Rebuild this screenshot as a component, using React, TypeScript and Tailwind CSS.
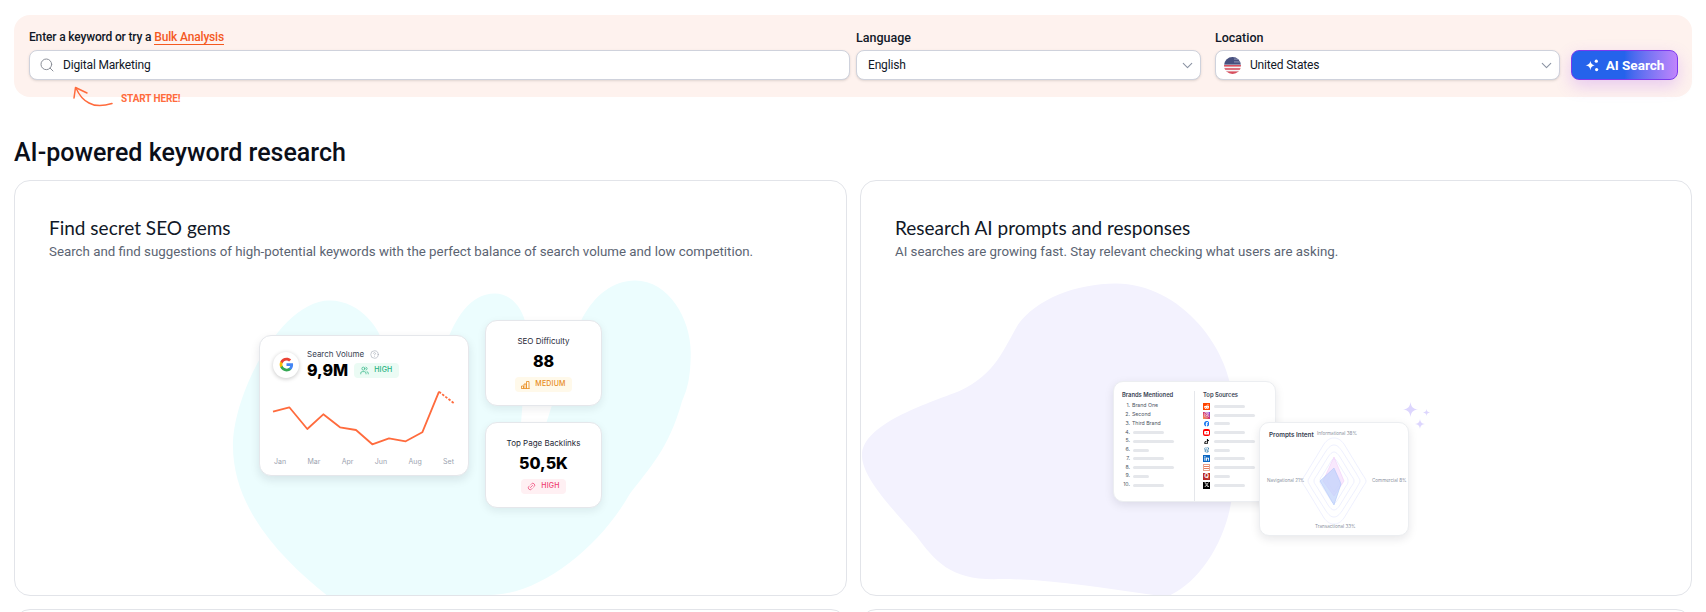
import { ChevronDown, CircleHelp, Link2, Search, Users } from 'lucide-react';
import {
  FaFacebook,
  FaInstagram,
  FaLinkedinIn,
  FaRedditAlien,
  FaTiktok,
  FaWordpressSimple,
  FaXTwitter,
  FaYoutube,
} from 'react-icons/fa6';

const MONTHS = ['Jan', 'Mar', 'Apr', 'Jun', 'Aug', 'Set'];
const BAR_WIDTHS = [31, 41, 16];

const SOURCES = [
  { icon: <FaRedditAlien />, tile: 'bg-[#ff4500] text-white' },
  { icon: <FaInstagram />, tile: 'bg-gradient-to-tr from-[#f9a03c] via-[#d6336c] to-[#7c3aed] text-white' },
  { icon: <FaFacebook />, tile: 'rounded-full bg-white text-[#1877f2]' },
  { icon: <FaYoutube />, tile: 'rounded-[2px] bg-[#ff0000] text-white' },
  { icon: <FaTiktok />, tile: 'bg-white text-black' },
  { icon: <FaWordpressSimple />, tile: 'bg-white text-[#2b7bb0]' },
  { icon: <FaLinkedinIn />, tile: 'bg-[#0a66c2] text-white' },
  { icon: <span className="h-[3px] w-[5px] border-y border-[#e9805f]" />, tile: 'border border-[#e9a48d] bg-white' },
  { icon: <span className="text-[6px] leading-none font-bold">Q</span>, tile: 'bg-[#b92b27] text-white' },
  { icon: <FaXTwitter />, tile: 'bg-black text-white' },
];

function UsFlag() {
  return (
    <svg width="17" height="17" viewBox="0 0 17 17" className="shrink-0">
      <defs>
        <clipPath id="flag-clip">
          <ellipse cx="8.5" cy="8.5" rx="8.5" ry="8.5" />
        </clipPath>
      </defs>
      <g clipPath="url(#flag-clip)">
        <rect width="17" height="17" fill="#f4f4f6" />
        <rect y="8" width="17" height="1.6" fill="#d8505f" />
        <rect y="11.2" width="17" height="1.6" fill="#d8505f" />
        <rect y="14.4" width="17" height="2.6" fill="#d8505f" />
        <rect width="17" height="7.6" fill="#47507f" />
        <rect y="1.6" x="10" width="7" height="1" fill="#8f94b5" />
        <rect y="4.4" x="10" width="7" height="1" fill="#8f94b5" />
      </g>
    </svg>
  );
}

function GoogleLogo() {
  return (
    <svg width="15" height="15" viewBox="0 0 24 24">
      <path fill="#4285F4" d="M22.5 12.2c0-.8-.1-1.5-.2-2.2H12v4.2h5.9c-.3 1.4-1 2.5-2.2 3.3v2.7h3.6c2.1-1.9 3.2-4.7 3.2-8z" />
      <path fill="#34A853" d="M12 23c3 0 5.4-1 7.3-2.7l-3.6-2.8c-1 .7-2.2 1.1-3.7 1.1-2.9 0-5.3-1.9-6.2-4.5H2.1v2.8C3.9 20.5 7.7 23 12 23z" />
      <path fill="#FBBC05" d="M5.8 14.1c-.2-.7-.4-1.4-.4-2.1s.1-1.4.4-2.1V7.1H2.1C1.400 8.600 1 10.300 1 12s.4 3.400 1.100 4.900l3.700-2.800z" />
      <path fill="#EA4335" d="M12 5.400c1.600 0 3.100.6 4.200 1.600l3.200-3.200C17.400 2 14.900 1 12 1 7.700 1 3.900 3.500 2.100 7.100l3.700 2.800c.9-2.600 3.300-4.500 6.200-4.500z" />
    </svg>
  );
}

function SearchField() {
  return (
    <div className="relative flex w-[821px] flex-col">
      <label className="mb-[5px] h-[15px] text-[12px] leading-[15px] font-medium tracking-[-0.16px] text-[#111827]">
        Enter a keyword or try a{' '}
        <span className="border-b border-[#f4591f] text-[#f4591f]">Bulk Analysis</span>
      </label>
      <div className="flex h-[30px] items-center rounded-lg border border-[#cfd2dc] bg-white pl-[9px] shadow-sm">
        <Search className="h-[16px] w-[16px] text-[#8b8f98]" strokeWidth={1.5} />
        <span className="ml-[8px] text-[12px] tracking-[-0.17px] text-[#111827]">Digital Marketing</span>
      </div>
      {/* arrow hint hangs over the bottom edge of the panel */}
      <div className="absolute top-[54px] left-[43px] flex items-center">
        <svg width="44" height="24" viewBox="0 0 44 24" fill="none" stroke="#ff6b3d" strokeWidth="1.500" strokeLinecap="round" strokeLinejoin="round">
          <path d="M40 19.500C32 22 24 23 17 19 11 16 7 11 4 4" />
          <path d="M3.500 3.500 2 14M3.500 3.500 15 9" />
        </svg>
        <span className="mt-[4px] ml-[5px] text-[10px] font-bold tracking-[-0.1px] text-[#ff6b3d]">START HERE!</span>
      </div>
    </div>
  );
}

function SelectField({ label, value, flag }: { label: string; value: string; flag?: boolean }) {
  return (
    <div className="flex w-[345px] flex-col">
      <label className="mb-[5px] h-[15px] text-[12.5px] leading-[15px] font-medium text-[#111827]">{label}</label>
      <div className={`flex h-[30px] items-center rounded-lg border border-[#cfd2dc] bg-white pr-[4px] shadow-sm ${flag ? 'pl-[8px]' : 'pl-[11px]'}`}>
        {flag && <UsFlag />}
        <span className={`${flag ? 'ml-[9px]' : ''} flex-1 text-[12px] tracking-[-0.17px] text-[#111827]`}>{value}</span>
        <ChevronDown className="h-[17px] w-[17px] text-[#8b93a3]" strokeWidth={1.5} />
      </div>
    </div>
  );
}

function SearchPanel() {
  return (
    <div className="flex h-[82px] items-start rounded-2xl bg-[#fef2ee] pt-[15px] pl-[15px]">
      <SearchField />
      <div className="ml-[6px]">
        <SelectField label="Language" value="English" />
      </div>
      <div className="ml-[14px]">
        <SelectField label="Location" value="United States" flag />
      </div>
      <button className="mt-[20px] ml-[11px] flex h-[30px] w-[107px] items-center justify-center gap-[7px] rounded-lg border border-[#7c3aed] bg-gradient-to-r from-[#2563eb] from-50% to-[#c084fc] text-[13.500px] font-bold text-white shadow-[0_6px_16px_rgba(168,85,247,0.25)]">
        <svg width="14" height="13" viewBox="0 0 13 12" fill="#fff">
          <path d="M5 1.500C5.400 4 6.300 5.100 9 5.800 6.300 6.500 5.400 7.600 5 10.500 4.600 7.600 3.700 6.500 0.500 5.800 3.700 5.100 4.600 4 5 1.500Z" />
          <circle cx="10.500" cy="2" r="1.500" />
          <circle cx="10.800" cy="9.800" r="1.500" />
        </svg>
        AI Search
      </button>
    </div>
  );
}

function Pill({ icon, label, color }: { icon: React.ReactNode; label: string; color: string }) {
  return (
    <span className={`flex h-[15px] items-center gap-[5px] rounded-[4px] px-[6px] text-[7px] font-medium tracking-[0.2px] ${color}`}>
      {icon}
      {label}
    </span>
  );
}

function VolumeCard() {
  return (
    <div className="mt-[15px] flex h-[141px] w-[210px] flex-col rounded-[12px] border border-[#e5e7eb] bg-white pt-[13px] shadow-[0_4px_10px_rgba(15,23,42,0.10)]">
      <div className="flex items-center pl-[13px]">
        <div className="flex h-[26px] w-[26px] items-center justify-center rounded-full bg-white shadow-[0_1px_4px_rgba(0,0,0,0.22)]">
          <GoogleLogo />
        </div>
        <div className="ml-[8px] flex flex-col">
          <div className="flex items-center gap-[6px] text-[8px] leading-[11px] text-[#374151]">
            Search Volume
            <CircleHelp className="h-[9px] w-[9px] text-[#9ca3af]" strokeWidth={1.5} />
          </div>
          <div className="flex items-center gap-[6px]">
            <span className="text-[16px] leading-[20px] font-extrabold text-black">9,9M</span>
            <Pill
              icon={<Users className="h-[9px] w-[9px]" strokeWidth={1.800} />}
              label="HIGH"
              color="bg-[#ebfbf4] text-[#22b07d]"
            />
          </div>
        </div>
      </div>
      <svg width="208" height="62" viewBox="0 0 208 62" fill="none" stroke="#ff6b3d" strokeWidth="1.800" strokeLinejoin="round" className="mt-[8px] shrink-0">
        <path d="M13 23.700 29.300 19.300 47.300 41 63.300 26.300 80 39.300 96 42 112.300 56.300 129 50.300 145.700 53.300 162.300 44.300 179 3.700" />
        <path d="M179 3.700 194 15.300" strokeDasharray="2.500 1.500" />
      </svg>
      <div className="mt-[7px] flex justify-between px-[14px] text-[7px] text-[#9ca3af]">
        {MONTHS.map((m) => (
          <span key={m}>{m}</span>
        ))}
      </div>
    </div>
  );
}

function StatCard({ title, value, pill }: { title: string; value: string; pill: React.ReactNode }) {
  return (
    <div className="flex h-[86px] w-[117px] flex-col items-center justify-center rounded-[12px] border border-[#e5e7eb] bg-white pt-[2px] shadow-[0_3px_8px_rgba(15,23,42,0.08)]">
      <span className="text-[8px] leading-[11px] text-[#1f2937]">{title}</span>
      <span className="mt-[4px] mb-[5px] text-[16px] leading-[21px] font-extrabold text-black">{value}</span>
      {pill}
    </div>
  );
}

function KeywordIllustration() {
  return (
    <div className="flex justify-center gap-[16px] font-[Inter,sans-serif]">
      <VolumeCard />
      <div className="flex flex-col gap-[16px]">
        <StatCard
          title="SEO Difficulty"
          value="88"
          pill={
            <Pill
              icon={
                <svg width="9" height="8" viewBox="0 0 9 8" fill="none" stroke="currentColor" strokeWidth="0.800">
                  <path d="M.5 7.500V5h2v2.500M3 7.500V3h2.200v4.500M5.500 7.500V.5h2.500v7M.3 7.500h8.400" />
                </svg>
              }
              label="MEDIUM"
              color="bg-[#fff9ea] text-[#e88a1a]"
            />
          }
        />
        <StatCard
          title="Top Page Backlinks"
          value="50,5K"
          pill={
            <Pill
              icon={<Link2 className="h-[9px] w-[9px] -rotate-45" strokeWidth={1.800} />}
              label="HIGH"
              color="bg-[#fff0f3] text-[#ee3a6e]"
            />
          }
        />
      </div>
    </div>
  );
}

function BrandsCard() {
  return (
    <div className="flex h-[121px] w-[163px] rounded-[10px] border border-[#eceef1] bg-white pt-[9px] pl-[8px] shadow-[0_3px_10px_rgba(15,23,42,0.10)]">
      <div className="w-[73px] border-r border-[#e5e7eb]">
        <div className="mb-[3px] text-[5.800px] leading-[8px] font-semibold text-[#374151]">Brands Mentioned</div>
        <div className="flex flex-col">
          {Array.from({ length: 10 }).map((_, i) => (
            <div key={i} className="flex h-[8.750px] items-center text-[5.200px] text-[#4b5563]">
              <span className="w-[8px] text-right">{i + 1}.</span>
              {i < 3 ? (
                <span className="ml-[2px]">{['Brand One', 'Second', 'Third Brand'][i]}</span>
              ) : (
                <span
                  className="ml-[3px] h-[3px] rounded-full bg-[#e5e7eb]"
                  style={{ width: BAR_WIDTHS[i % 3] }}
                />
              )}
            </div>
          ))}
        </div>
      </div>
      <div className="ml-[8px]">
        <div className="mb-[3px] text-[5.800px] leading-[8px] font-semibold text-[#374151]">Top Sources</div>
        <div className="flex flex-col">
          {SOURCES.map((s, i) => (
            <div key={i} className="flex h-[8.750px] items-center">
              <span className={`flex h-[7px] w-[7px] items-center justify-center text-[5.500px] ${s.tile}`}>{s.icon}</span>
              <span
                className="ml-[4px] h-[3px] rounded-full bg-[#e5e7eb]"
                style={{ width: BAR_WIDTHS[i % 3] }}
              />
            </div>
          ))}
        </div>
      </div>
    </div>
  );
}

function IntentCard() {
  return (
    <div className="absolute top-[41px] left-[146px] h-[114px] w-[150px] rounded-[10px] border border-[#eceef1] bg-white shadow-[0_3px_10px_rgba(15,23,42,0.10)]">
      <svg width="150" height="114" viewBox="0 -1 150 114" fill="none" className="absolute inset-0">
        <g stroke="#e3e6fd" strokeWidth="0.600" strokeLinejoin="round">
          <path d="M74 14C78 14 81 16 84 20L101 48C104 53 106 55 106 57 106 59 104 61 101 66L84 94C81 98 78 100 74 100 70 100 67 98 64 94L47 66C44 61 42 59 42 57 42 55 44 53 47 48L64 20C67 16 70 14 74 14Z" />
          <path d="M74 21C77 21 79 23 82 27L96 49C98 53 100 55 100 57 100 59 98 61 96 65L82 87C79 91 77 93 74 93 71 93 69 91 66 87L52 65C50 61 48 59 48 57 48 55 50 53 52 49L66 27C69 23 71 21 74 21Z" />
          <path d="M74 28C76 28 78 30 80 33L91 51C93 54 94 55 94 57 94 59 93 60 91 63L80 81C78 84 76 86 74 86 72 86 70 84 68 81L57 63C55 60 54 59 54 57 54 55 55 54 57 51L68 33C70 30 72 28 74 28Z" />
          <path d="M74 35C76 35 77 37 78 39L86 52C88 54 88 56 88 57 88 58 88 60 86 62L78 75C77 77 76 79 74 79 72 79 71 77 70 75L62 62C60 60 60 58 60 57 60 56 60 54 62 52L70 39C71 37 72 35 74 35Z" />
          <path d="M74 46 81 57 74 68 67 57Z" />
        </g>
        <path d="M74 33 84 57 74 72 63 57Z" fill="#f3d9fb" fillOpacity="0.600" stroke="#ecc7f7" strokeWidth="0.500" strokeLinejoin="round" />
        <path d="M60 57 74 44 81 60 74 81Z" fill="#bfd2fb" fillOpacity="0.700" stroke="#a9c1f8" strokeWidth="0.500" strokeLinejoin="round" />
      </svg>
      <span className="absolute top-[8px] left-[9px] text-[6.300px] leading-[9px] font-semibold text-[#374151]">Prompts Intent</span>
      <span className="absolute top-[7px] left-[57px] text-[4.600px] leading-[7px] whitespace-nowrap text-[#8b92a0]">Informational 38%</span>
      <span className="absolute top-[54px] left-[7px] text-[4.600px] leading-[7px] whitespace-nowrap text-[#8b92a0]">Navigational 21%</span>
      <span className="absolute top-[54px] left-[112px] text-[4.600px] leading-[7px] whitespace-nowrap text-[#8b92a0]">Commercial 8%</span>
      <span className="absolute top-[100px] left-[55px] text-[4.600px] leading-[7px] whitespace-nowrap text-[#8b92a0]">Transactional 33%</span>
    </div>
  );
}

function Sparkle({ size, className }: { size: number; className: string }) {
  return (
    <svg width={size} height={size} viewBox="0 0 10 10" fill="#ddd6fe" className={className}>
      <path d="M5 0C5.400 3 6.500 4.500 10 5 6.500 5.500 5.400 7 5 10 4.600 7 3.500 5.500 0 5 3.500 4.500 4.600 3 5 0Z" />
    </svg>
  );
}

function PromptsIllustration() {
  return (
    <div className="relative mx-auto h-[155px] w-[326px] font-[Inter,sans-serif]">
      <BrandsCard />
      <IntentCard />
      <Sparkle size={15} className="absolute top-[21px] left-[290px]" />
      <Sparkle size={7} className="absolute top-[28px] left-[310px]" />
      <Sparkle size={10} className="absolute top-[38px] left-[302px]" />
    </div>
  );
}

function FeatureCard({
  title,
  text,
  blob,
  topGap,
  children,
}: {
  title: string;
  text: string;
  blob: React.ReactNode;
  topGap: string;
  children: React.ReactNode;
}) {
  return (
    <div className="relative h-[416px] overflow-hidden rounded-2xl border border-[#e2e4e9] bg-white">
      {blob}
      <div className="relative pt-[33px] pl-[34px]">
        <h2 className="font-[Lato,sans-serif] text-[19px] leading-[28px] text-[#111827]">{title}</h2>
        <p className="text-[13.300px] leading-[20px] text-[#5b6472]">{text}</p>
      </div>
      <div className={`relative ${topGap}`}>{children}</div>
    </div>
  );
}

const bottomRow = 'h-[416px] rounded-2xl border border-[#e2e4e9] bg-white';

export default function App() {
  return (
    <div className="h-[612px] overflow-hidden bg-white px-[14px] pt-[15px] font-[Roboto,sans-serif]">
      <SearchPanel />
      <h1 className="mt-[40px] text-[25px] leading-[32px] font-medium text-[#0b0f19]">AI-powered keyword research</h1>
      <div className="mt-[11px] grid grid-cols-[833px_832px] gap-[13px]">
        <FeatureCard
          title="Find secret SEO gems"
          text="Search and find suggestions of high-potential keywords with the perfect balance of search volume and low competition."
          topGap="mt-[58px]"
          blob={
            <svg viewBox="14 181 833 416" className="absolute inset-0 h-full w-full">
              <path
                fill="#ecfdfe"
                d="M326 597C280 560 232 510 232 447 232 395 280 301 329 301 365 301 385 340 381 345L446 345C455 320 470 294 495 294 515 294 528 315 528 340L521 430 545 430C555 400 570 350 582 321 595 295 615 281 636 281 670 281 692 320 692 353 692 385 686 395 683 403 670 450 650 470 631 495 600 550 540 597 490 597Z"
              />
            </svg>
          }
        >
          <KeywordIllustration />
        </FeatureCard>
        <FeatureCard
          title="Research AI prompts and responses"
          text="AI searches are growing fast. Stay relevant checking what users are asking."
          topGap="mt-[119px]"
          blob={
            <svg viewBox="860 181 832 416" className="absolute inset-0 h-full w-full">
              <path
                fill="#f3f2fe"
                d="M1115 284C1075 284 1035 300 1017 325 1003 348 995 375 958 392 925 405 860 425 860 457 860 480 895 515 914 537 935 565 950 583 1000 581 1050 581 1100 590 1153 597L1170 597C1205 580 1233 530 1233 480L1233 410C1233 350 1180 284 1115 284Z"
              />
            </svg>
          }
        >
          <PromptsIllustration />
        </FeatureCard>
        <div className={bottomRow} />
        <div className={bottomRow} />
      </div>
    </div>
  );
}
